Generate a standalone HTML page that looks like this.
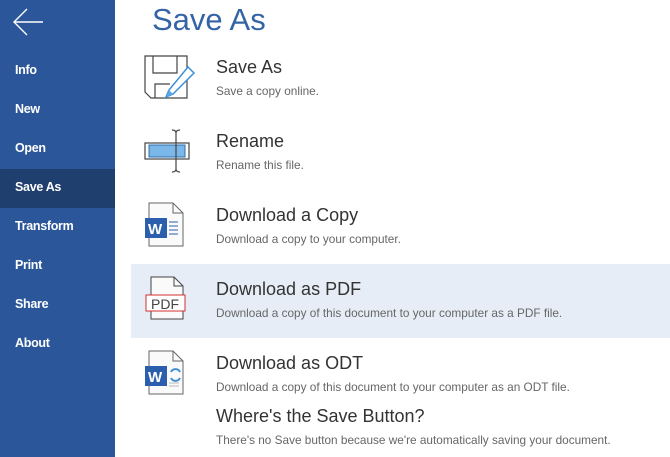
<!DOCTYPE html>
<html><head><style>
body{margin:0;width:670px;height:457px;overflow:hidden;background:#fff;font-family:"Liberation Sans",sans-serif;position:relative}
#side{position:absolute;left:0;top:0;width:115px;height:457px;background:#2b579a}
.nav{position:absolute;left:15px;color:#fff;font-size:12.5px;font-weight:bold;letter-spacing:-0.3px}
.sel{position:absolute;left:0;top:169px;width:115px;height:39px;background:#1f3f6e}
.t{position:absolute;left:216px;font-size:18px;color:#333}
.s{position:absolute;left:216px;font-size:11.8px;color:#666}
.ic{position:absolute}
</style></head><body>
<div id="side">
<svg class="ic" style="left:12px;top:8px" width="34" height="28"><path d="M2 14H31M15 1L2 14L15 27" stroke="#fff" stroke-width="1.4" fill="none"/></svg>
<div class="sel"></div>
<div class="nav" style="top:63px">Info</div>
<div class="nav" style="top:102px">New</div>
<div class="nav" style="top:141px">Open</div>
<div class="nav" style="top:180px">Save As</div>
<div class="nav" style="top:219px">Transform</div>
<div class="nav" style="top:258px">Print</div>
<div class="nav" style="top:297px">Share</div>
<div class="nav" style="top:336px">About</div>
</div>
<div style="position:absolute;left:152px;top:2px;font-size:31px;color:#3564a6">Save As</div>
<div style="position:absolute;left:131px;top:264px;width:539px;height:74px;background:#e6edf7"></div>

<svg class="ic" style="left:140px;top:52px" width="56" height="50">
<path d="M5 4H47V46H11L5 40Z" fill="#fff" stroke="#444" stroke-width="1.2"/>
<path d="M13 4V21H37V4M15 46V32H30" stroke="#444" stroke-width="1.2" fill="none"/>
<path d="M48 15L54 21L33 42L26 45L29 38Z" fill="#fff" stroke="#3c8fd6" stroke-width="1.5"/>
<path d="M26 45L29 38L33 42Z" fill="#5aa6e6"/>
</svg>
<svg class="ic" style="left:140px;top:128px" width="52" height="46">
<rect x="5" y="15" width="44" height="16" fill="#fff" stroke="#444" stroke-width="1.2"/>
<rect x="9" y="17" width="36" height="12" fill="#7bb7e8" stroke="#2b6fb0" stroke-width="1"/>
<path d="M36 3V43M32 2Q36 2 36 5Q36 2 40 2M32 44Q36 44 36 41Q36 44 40 44" stroke="#444" stroke-width="1.2" fill="none"/>
</svg>
<svg class="ic" style="left:143px;top:202px" width="44" height="46">
<path d="M6 1H30L40 11V44H6Z" fill="#fafafa" stroke="#666" stroke-width="1"/><path d="M30 1V11H40" stroke="#666" fill="none"/>
<rect x="2" y="16" width="22" height="20" fill="#2b5fad"/><text x="5" y="32" font-size="15" font-weight="bold" fill="#fff" font-family="Liberation Sans">W</text>
<path d="M26 20H35M26 24H35M26 28H35M26 32H35" stroke="#2b5fad"/>
</svg>
<svg class="ic" style="left:143px;top:276px" width="46" height="46">
<path d="M8 1H31L40 10V43H8Z" fill="#fafafa" stroke="#444" stroke-width="1"/><path d="M31 1V10H40" stroke="#444" fill="none"/>
<rect x="3" y="19" width="39" height="16" fill="#fff" stroke="#d32f2f" stroke-width="1"/>
<text x="8" y="33" font-size="14" fill="#444" font-family="Liberation Sans">PDF</text>
</svg>
<svg class="ic" style="left:143px;top:350px" width="44" height="46">
<path d="M6 1H30L40 11V44H6Z" fill="#fafafa" stroke="#666" stroke-width="1"/><path d="M30 1V11H40" stroke="#666" fill="none"/>
<rect x="2" y="16" width="22" height="20" fill="#2b5fad"/><text x="5" y="32" font-size="15" font-weight="bold" fill="#fff" font-family="Liberation Sans">W</text>
<path d="M28 22A5 5 0 0 1 37 22M37 28A5 5 0 0 1 28 28" stroke="#3c8fd6" stroke-width="2" fill="none"/>
<path d="M26 33H36M26 36H36" stroke="#bbb"/>
</svg>

<div class="t" style="top:57px">Save As</div><div class="s" style="top:84px">Save a copy online.</div>
<div class="t" style="top:131px">Rename</div><div class="s" style="top:158px">Rename this file.</div>
<div class="t" style="top:205px">Download a Copy</div><div class="s" style="top:232px">Download a copy to your computer.</div>
<div class="t" style="top:279px">Download as PDF</div><div class="s" style="top:306px">Download a copy of this document to your computer as a PDF file.</div>
<div class="t" style="top:353px">Download as ODT</div><div class="s" style="top:380px">Download a copy of this document to your computer as an ODT file.</div>
<div class="t" style="top:406px">Where's the Save Button?</div><div class="s" style="top:433px">There's no Save button because we're automatically saving your document.</div>
</body></html>
